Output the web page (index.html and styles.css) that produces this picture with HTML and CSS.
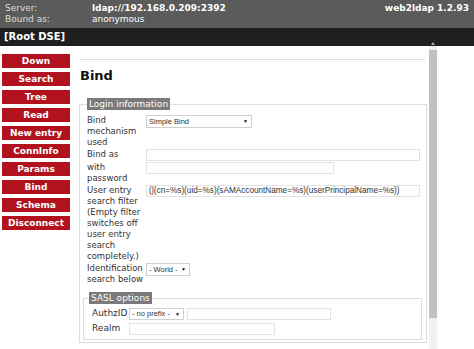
FILE: index.html
```html
<!DOCTYPE html>
<html lang="en">
<head>
    <meta charset="UTF-8">
    <title>web2ldap - Bind</title>
    <link rel="stylesheet" href="styles.css">
</head>
<body>
    <div class="top">
        <div class="conn">
            <div class="conn-row"><span class="key">Server:</span><b>ldap://192.168.0.209:2392</b></div>
            <div class="conn-row"><span class="key">Bound as:</span><span>anonymous</span></div>
        </div>
        <b class="version">web2ldap 1.2.93</b>
    </div>
    <div class="dn-bar">[Root DSE]</div>

    <div class="main">
        <nav class="nav">
            <a class="btn">Down</a>
            <a class="btn">Search</a>
            <a class="btn">Tree</a>
            <a class="btn">Read</a>
            <a class="btn">New entry</a>
            <a class="btn">ConnInfo</a>
            <a class="btn">Params</a>
            <a class="btn">Bind</a>
            <a class="btn">Schema</a>
            <a class="btn">Disconnect</a>
        </nav>

        <div class="content">
            <hr class="rule">
            <h1>Bind</h1>
            <fieldset class="box">
                <legend>Login information</legend>
                <div class="form">
                    <label>Bind mechanism used</label>
                    <div><span class="sel sel-mech">Simple Bind<i class="caret">&#9660;</i></span></div>

                    <label>Bind as</label>
                    <div><span class="field field-wide"></span></div>

                    <label>with password</label>
                    <div><span class="field field-pw"></span></div>

                    <label>User entry search filter (Empty filter switches off user entry search completely.)</label>
                    <div><span class="field field-wide">(|(cn=%s)(uid=%s)(sAMAccountName=%s)(userPrincipalName=%s))</span></div>

                    <label>Identification search below</label>
                    <div><span class="sel sel-world">- World -<i class="caret">&#9660;</i></span></div>
                </div>

                <fieldset class="box sasl">
                    <legend>SASL options</legend>
                    <div class="form form-sasl">
                        <label>AuthzID</label>
                        <div class="pair">
                            <span class="sel sel-prefix">- no prefix -<i class="caret">&#9660;</i></span>
                            <span class="field field-authz"></span>
                        </div>
                        <label>Realm</label>
                        <div><span class="field field-realm"></span></div>
                    </div>
                </fieldset>
            </fieldset>
        </div>

        <div class="scroll">
            <div class="scroll-arrow"></div>
            <div class="scroll-thumb"></div>
        </div>
    </div>
</body>
</html>
```

FILE: styles.css
```css
body {
    margin: 0;
    width: 474px;
    height: 349px;
    overflow: hidden;
    background: #fff;
    font-family: "DejaVu Sans", Verdana, sans-serif;
    font-size: 9px;
    color: #333;
}
.top {
    display: flex;
    justify-content: space-between;
    height: 28px;
    padding: 0 5px 0 5px;
    background-color: #5b5b5b;
    color: #fff;
    line-height: 11px;
}
.conn {
    padding-top: 3px;
}
.conn-row {
    display: flex;
}
.key {
    width: 87px;
    color: #ddd;
}
.version {
    padding-top: 3px;
}
.dn-bar {
    height: 18px;
    line-height: 18px;
    padding-left: 4px;
    background-color: #1f1f1f;
    color: #fff;
    font-weight: bold;
    font-size: 10px;
}
.main {
    display: flex;
    height: 303px;
}
.nav {
    display: flex;
    flex-direction: column;
    gap: 4px;
    width: 68px;
    padding: 8px 9px 0 2px;
}
.btn {
    display: block;
    height: 14px;
    line-height: 14px;
    background-color: #b1121e;
    color: #fff;
    font-weight: bold;
    text-align: center;
}
.content {
    width: 348px;
    padding-top: 13px;
}
.rule {
    margin: 0 2px 0 1px;
    border: none;
    border-top: 1px solid #ddd;
}
h1 {
    margin: 8px 0 0 1px;
    font-size: 13px;
    line-height: 16px;
    color: #111;
}
.box {
    margin: 14px 0 0 0;
    padding: 0 4px 2px 3px;
    border: 1px solid #ddd;
}
.box legend {
    margin-left: 4px;
    padding: 0 2px;
    background-color: #7a7a7a;
    color: #fff;
    line-height: 12px;
}
.form {
    display: grid;
    grid-template-columns: 59px 1fr;
    row-gap: 1px;
    margin-top: 5px;
    padding-left: 4px;
    line-height: 11px;
}
.form label {
    font-size: 8.5px;
}
.field, .sel {
    display: block;
    box-sizing: border-box;
    height: 12px;
    border: 1px solid #e2e2e2;
    background: #fff;
    font-family: "Liberation Sans", Arial, sans-serif;
    font-size: 8.2px;
    line-height: 10px;
    padding-left: 2px;
    color: #333;
    white-space: nowrap;
    overflow: hidden;
}
.sel {
    position: relative;
    height: 13px;
    border-color: #cfcfcf;
    font-size: 7.5px;
    line-height: 11px;
}
.caret {
    position: absolute;
    right: 3px;
    top: 0;
    font-style: normal;
    font-size: 5px;
    color: #111;
}
.field-wide {
    width: 274px;
}
.field-pw {
    width: 188px;
}
.sel-mech {
    width: 106px;
}
.sel-world {
    width: 44px;
}
.sasl {
    margin: 7px 0 0 0;
    padding: 0 0 4px 0;
}
.sasl legend {
    margin-left: 5px;
}
.form-sasl {
    grid-template-columns: 37px 1fr;
    row-gap: 3px;
    margin-top: 4px;
    padding-left: 8px;
}
.form-sasl label {
    font-size: 9px;
}
.pair {
    display: flex;
    gap: 3px;
}
.sel-prefix {
    width: 55px;
    height: 12px;
    line-height: 10px;
}
.field-authz {
    width: 144px;
}
.field-realm {
    width: 146px;
}
.scroll {
    position: relative;
    display: flex;
    flex-direction: column;
    width: 8px;
    margin-left: 2px;
    background-color: #f1f1f1;
}
.scroll-arrow {
    position: absolute;
    top: -4px;
    left: 2px;
    border-left: 2px solid transparent;
    border-right: 2px solid transparent;
    border-bottom: 3px solid #aaa;
}
.scroll-thumb {
    height: 268px;
    margin-top: 4px;
    background-color: #c1c1c1;
}
```
